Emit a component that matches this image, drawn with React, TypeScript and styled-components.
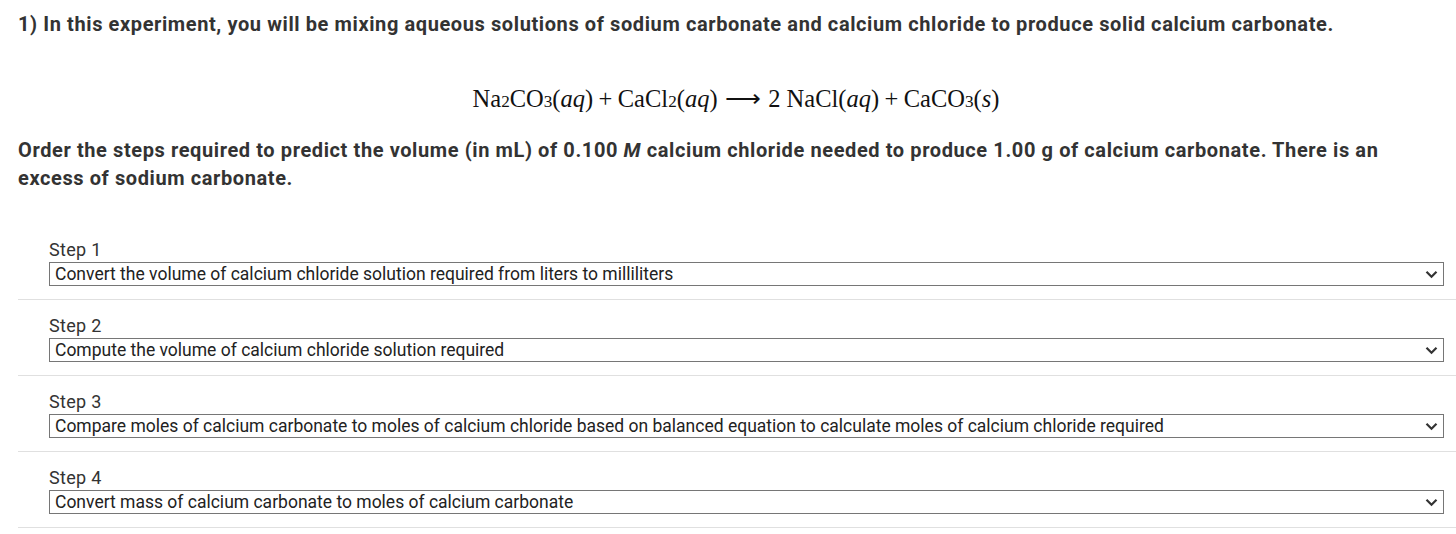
import React from "react";
import styled, { createGlobalStyle } from "styled-components";

const GlobalStyle = createGlobalStyle`
  html, body {
    margin: 0;
    padding: 0;
    background: #fff;
  }
  body {
    font-family: Roboto, "Liberation Sans", Arial, sans-serif;
    color: #333;
  }
`;

const Page = styled.div`
  padding: 10px 0 0 18px;
`;

const Prompt = styled.p`
  margin: 0;
  font-size: 20px;
  font-weight: 700;
  line-height: 28px;
  letter-spacing: 0.6px;
  color: #333;
`;

const Equation = styled.div`
  display: flex;
  justify-content: center;
  align-items: baseline;
  margin: 46px 0 22px;
  padding-right: 2px;
  font-family: "Liberation Serif", "Times New Roman", serif;
  font-size: 24.5px;
  line-height: 30px;
  color: #111;
  white-space: pre;
`;

const Sub = styled.sub`
  font-size: 0.7em;
  vertical-align: -0.34em;
  line-height: 0;
`;

const Var = styled.i`
  font-style: italic;
`;

const Op = styled.span`
  margin: 0 0.22em;
`;

const Arrow = styled.span`
  margin: 0 0.3em;
`;

const Question = styled(Prompt)`
  max-width: 1400px;
`;

const Steps = styled.div`
  margin-top: 32px;
`;

const StepRow = styled.div`
  display: flex;
  flex-direction: column;
  gap: 1px;
  padding: 15px 12px 13px 31px;
  border-bottom: 1px solid #e0e0e0;
`;

const StepLabel = styled.label`
  font-size: 18px;
  line-height: 22px;
  letter-spacing: 0.3px;
  color: #333;
`;

const SelectBox = styled.div`
  display: flex;
  align-items: center;
  justify-content: space-between;
  height: 24px;
  box-sizing: border-box;
  border: 1px solid #767676;
  padding: 0 5px 0 5px;
  font-size: 17.5px;
  color: #222;
  background: #fff;
`;

const steps = [
  "Convert the volume of calcium chloride solution required from liters to milliliters",
  "Compute the volume of calcium chloride solution required",
  "Compare moles of calcium carbonate to moles of calcium chloride based on balanced equation to calculate moles of calcium chloride required",
  "Convert mass of calcium carbonate to moles of calcium carbonate",
];

const Chevron = () => (
  <svg width="13" height="9" viewBox="0 0 13 9" fill="none">
    <path d="M1.5 1.8 L6.5 6.8 L11.5 1.8" stroke="#333" strokeWidth="2.2" />
  </svg>
);

export default function App() {
  return (
    <Page>
      <GlobalStyle />
      <Prompt>
        1) In this experiment, you will be mixing aqueous solutions of sodium carbonate and calcium chloride to produce solid calcium carbonate.
      </Prompt>
      <Equation>
        Na<Sub>2</Sub>CO<Sub>3</Sub>(<Var>aq</Var>)<Op>+</Op>CaCl<Sub>2</Sub>(<Var>aq</Var>)
        <Arrow>⟶</Arrow>2 NaCl(<Var>aq</Var>)<Op>+</Op>CaCO<Sub>3</Sub>(<Var>s</Var>)
      </Equation>
      <Question>
        Order the steps required to predict the volume (in mL) of 0.100 <i>M</i> calcium chloride needed to produce 1.00 g of calcium carbonate. There is an excess of sodium carbonate.
      </Question>
      <Steps>
        {steps.map((text, i) => (
          <StepRow key={i}>
            <StepLabel>Step {i + 1}</StepLabel>
            <SelectBox>
              <span>{text}</span>
              <Chevron />
            </SelectBox>
          </StepRow>
        ))}
      </Steps>
    </Page>
  );
}
